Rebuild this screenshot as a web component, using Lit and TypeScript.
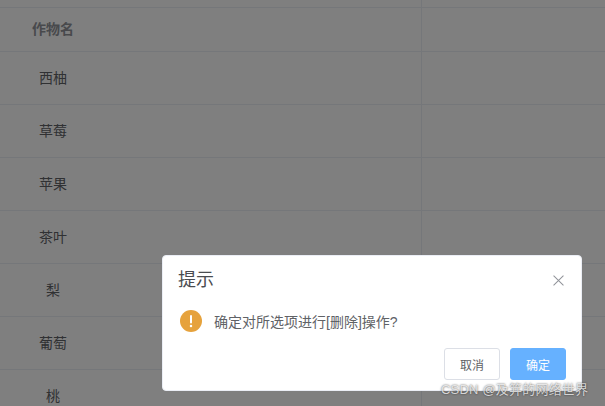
import { LitElement, html, css } from "lit";
import { customElement } from "lit/decorators.js";

const rows = ["西柚", "草莓", "苹果", "茶叶", "梨", "葡萄", "桃"];

@customElement("app-root")
export class AppRoot extends LitElement {
  static styles = css`
    :host {
      display: block;
      position: relative;
      width: 605px;
      height: 406px;
      overflow: hidden;
      background: #fff;
      font-family: "Liberation Sans", "Noto Sans CJK SC", sans-serif;
      font-size: 14px;
    }
    .table { display: flex; flex-direction: column; }
    .row {
      display: grid;
      grid-template-columns: 106px 316px 1fr;
      height: 53px;
      box-sizing: border-box;
      border-bottom: 1px solid #ebeef5;
      flex: none;
    }
    .row.top { height: 8px; }
    .row.head { height: 44px; font-weight: 700; }
    .cell {
      display: flex;
      align-items: center;
      justify-content: center;
      color: #606266;
      padding-bottom: 3px;
    }
    .head .cell { color: #909399; padding-bottom: 4px; }
    .mid { border-right: 1px solid #ebeef5; }
    .mask { position: absolute; inset: 0; background: rgba(0, 0, 0, 0.5); }
    .dialog {
      position: absolute;
      left: 162px;
      top: 255px;
      width: 420px;
      height: 136px;
      box-sizing: border-box;
      background: #fff;
      border-radius: 4px;
      border: 1px solid #ebeef5;
      display: flex;
      flex-direction: column;
      padding: 15px 15px 10px;
    }
    .title {
      display: flex;
      justify-content: space-between;
      align-items: center;
      font-size: 18px;
      line-height: 18px;
      color: #4a4c50;
      height: 18px;
    }
    .close { width: 11px; height: 11px; display: block; margin-right: 2px; }
    .content {
      display: flex;
      align-items: center;
      gap: 12px;
      margin-top: 20px;
      height: 24px;
      padding-left: 2px;
      color: #606266;
      font-size: 14px;
    }
    .warn { width: 22px; height: 22px; display: block; flex: none; }
    .footer { display: flex; justify-content: flex-end; gap: 10px; margin-top: auto; }
    .btn {
      width: 56px;
      height: 32px;
      box-sizing: border-box;
      border: 1px solid #dcdfe6;
      border-radius: 3px;
      background: #fff;
      color: #606266;
      font: inherit;
      font-size: 12px;
      padding: 0;
    }
    .btn.primary { background: #66b1ff; border-color: #66b1ff; color: #fff; }
    .mark {
      position: absolute;
      left: 441px;
      top: 381px;
      font-size: 13px;
      letter-spacing: 0.2px;
      line-height: 17px;
      color: rgba(255, 255, 255, 0.75);
      text-shadow: 0 0 2px rgba(40, 40, 40, 0.9);
      white-space: nowrap;
    }
  `;

  render() {
    return html`
      <div class="table">
        <div class="row top"><div></div><div class="mid"></div><div></div></div>
        <div class="row head">
          <div class="cell">作物名</div><div class="mid"></div><div></div>
        </div>
        ${rows.map(
          (r) => html`<div class="row">
            <div class="cell">${r}</div><div class="mid"></div><div></div>
          </div>`
        )}
      </div>
      <div class="mask"></div>
      <div class="dialog">
        <div class="title">
          <span>提示</span>
          <svg class="close" viewBox="0 0 12 12" fill="none" stroke="#909399" stroke-width="1.1">
            <path d="M.6.6l10.8 10.8M11.4.6L.6 11.4" />
          </svg>
        </div>
        <div class="content">
          <svg class="warn" viewBox="0 0 22 22">
            <circle cx="11" cy="11" r="11" fill="#e6a23c" />
            <rect x="10" y="5" width="2" height="8.5" rx="1" fill="#fff" />
            <circle cx="11" cy="16" r="1.25" fill="#fff" />
          </svg>
          <span>确定对所选项进行[删除]操作?</span>
        </div>
        <div class="footer">
          <button class="btn">取消</button>
          <button class="btn primary">确定</button>
        </div>
      </div>
      <div class="mark">CSDN @及笄的网络世界</div>
    `;
  }
}
